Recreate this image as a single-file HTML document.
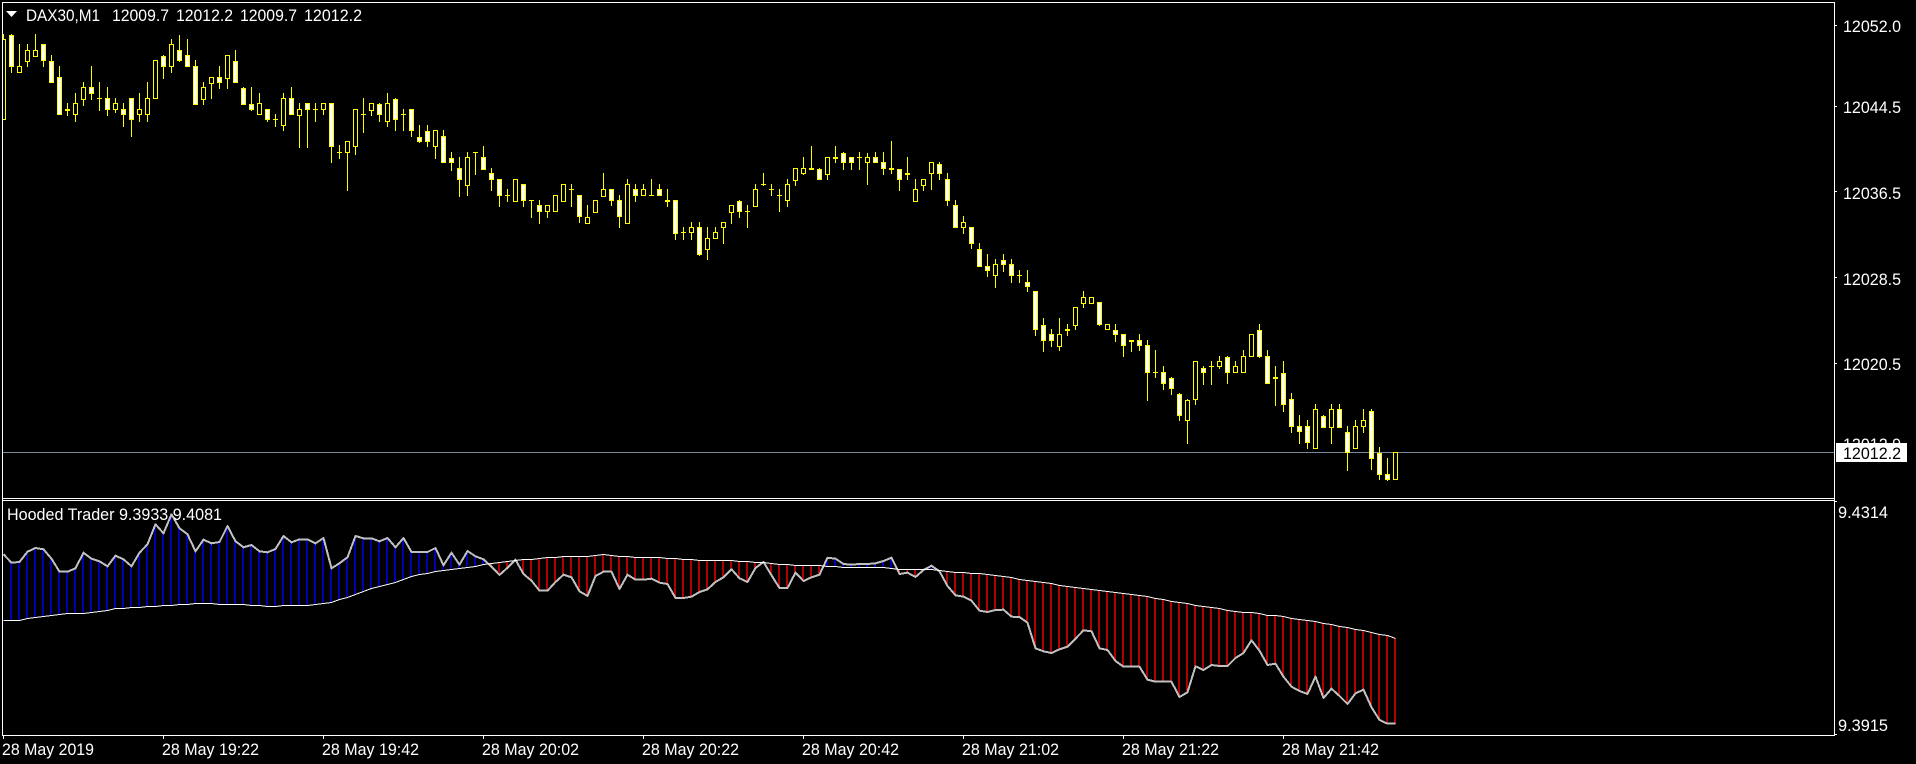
<!DOCTYPE html>
<html>
<head>
<meta charset="utf-8">
<title>DAX30,M1</title>
<style>
html,body{margin:0;padding:0;background:#000;width:1916px;height:764px;overflow:hidden}
svg{display:block;position:absolute;left:0;top:0}
text{font-family:"Liberation Sans",Arial,sans-serif;font-size:17px;fill:#fff;white-space:pre}
</style>
</head>
<body>
<svg id="s" width="1916" height="764" viewBox="0 0 1916 764" xmlns="http://www.w3.org/2000/svg">
<defs><clipPath id="c"><rect x="3" y="3" width="1831" height="495"/></clipPath></defs>
<rect width="1916" height="764" fill="#000"/>
<rect x="3" y="452" width="1831" height="1" fill="#778899"/>
<g id="candles" clip-path="url(#c)" shape-rendering="crispEdges"></g>
<g id="ind"></g>
<g shape-rendering="crispEdges" fill="#fff">
<rect x="2" y="2" width="1833" height="1"/>
<rect x="2" y="498" width="1833" height="1"/>
<rect x="2" y="500" width="1833" height="1"/>
<rect x="2" y="735" width="1833" height="1"/>
<rect x="2" y="2" width="1" height="734"/>
<rect x="1834" y="2" width="1" height="734"/>
<rect x="1835" y="25" width="2" height="1"/>
<rect x="1835" y="106" width="2" height="1"/>
<rect x="1835" y="191" width="2" height="1"/>
<rect x="1835" y="277" width="2" height="1"/>
<rect x="1835" y="363" width="2" height="1"/>
<rect x="1835" y="501" width="2" height="1"/>
<rect x="1835" y="734" width="2" height="1"/>
<rect x="3" y="736" width="1" height="3"/>
<rect x="163" y="736" width="1" height="3"/>
<rect x="323" y="736" width="1" height="3"/>
<rect x="483" y="736" width="1" height="3"/>
<rect x="643" y="736" width="1" height="3"/>
<rect x="803" y="736" width="1" height="3"/>
<rect x="963" y="736" width="1" height="3"/>
<rect x="1123" y="736" width="1" height="3"/>
<rect x="1283" y="736" width="1" height="3"/>
</g>
<polygon points="6,11 17,11 11.5,17" fill="#fff"/>
<text lengthAdjust="spacingAndGlyphs" x="26" y="21" textLength="74">DAX30,M1</text>
<text lengthAdjust="spacingAndGlyphs" x="112" y="21" textLength="57">12009.7</text>
<text lengthAdjust="spacingAndGlyphs" x="176" y="21" textLength="57">12012.2</text>
<text lengthAdjust="spacingAndGlyphs" x="240" y="21" textLength="57">12009.7</text>
<text lengthAdjust="spacingAndGlyphs" x="304" y="21" textLength="58">12012.2</text>
<text lengthAdjust="spacingAndGlyphs" x="1843" y="32" textLength="58">12052.0</text>
<text lengthAdjust="spacingAndGlyphs" x="1843" y="113" textLength="58">12044.5</text>
<text lengthAdjust="spacingAndGlyphs" x="1843" y="199" textLength="58">12036.5</text>
<text lengthAdjust="spacingAndGlyphs" x="1843" y="285" textLength="58">12028.5</text>
<text lengthAdjust="spacingAndGlyphs" x="1843" y="370" textLength="58">12020.5</text>
<text lengthAdjust="spacingAndGlyphs" x="1843" y="450" textLength="58">12012.9</text>
<rect x="1836" y="443" width="71" height="19" fill="#fff" shape-rendering="crispEdges"/>
<text lengthAdjust="spacingAndGlyphs" x="1843" y="459" textLength="58" style="fill:#000">12012.2</text>
<text lengthAdjust="spacingAndGlyphs" x="1838" y="518" textLength="50">9.4314</text>
<text lengthAdjust="spacingAndGlyphs" x="1838" y="731" textLength="50">9.3915</text>
<text lengthAdjust="spacingAndGlyphs" x="7" y="520" textLength="215">Hooded Trader 9.3933 9.4081</text>
<text lengthAdjust="spacingAndGlyphs" x="2" y="755" textLength="92">28 May 2019</text>
<text lengthAdjust="spacingAndGlyphs" x="162" y="755" textLength="97">28 May 19:22</text>
<text lengthAdjust="spacingAndGlyphs" x="322" y="755" textLength="97">28 May 19:42</text>
<text lengthAdjust="spacingAndGlyphs" x="482" y="755" textLength="97">28 May 20:02</text>
<text lengthAdjust="spacingAndGlyphs" x="642" y="755" textLength="97">28 May 20:22</text>
<text lengthAdjust="spacingAndGlyphs" x="802" y="755" textLength="97">28 May 20:42</text>
<text lengthAdjust="spacingAndGlyphs" x="962" y="755" textLength="97">28 May 21:02</text>
<text lengthAdjust="spacingAndGlyphs" x="1122" y="755" textLength="97">28 May 21:22</text>
<text lengthAdjust="spacingAndGlyphs" x="1282" y="755" textLength="97">28 May 21:42</text>
</svg>
<script>
(function(){
var A=[[102,358,118,358,0],[102,218,106,200,1],[132,218,199,218,0],[132,200,151,185,0],[102,170,151,170,0],[132,200,133,182,1],[166,248,184,248,1],[198,344,232,344,1],[310,345,328,332,1],[280,365,310,344,0],[247,315,262,298,0],[198,298,262,281,1],[247,332,295,295,1],[262,345,295,329,1],[295,338,310,328,0],[310,380,328,344,1],[295,410,295,359,1],[280,365,328,344,0],[247,365,295,344,0],[181,296,181,296,0],[166,236,169,200,1],[118,218,133,200,0],[106,185,151,182,1],[118,200,166,200,1],[181,314,199,314,1],[247,314,262,298,0],[232,296,232,250,0],[198,266,232,248,1],[166,266,166,236,0],[151,248,184,248,1],[262,314,265,314,1],[262,332,313,329,1],[280,344,310,344,0],[328,365,328,359,1],[343,380,358,358,1],[280,392,295,377,0],[262,344,295,344,1],[310,443,328,347,0],[310,443,310,329,1],[310,365,328,328,1],[310,344,310,329,0],[310,488,310,440,1],[437,476,457,457,1],[424,572,424,457,0],[328,462,328,440,0],[295,396,343,343,1],[310,347,310,332,0],[310,365,313,344,1],[280,380,310,365,0],[295,392,298,359,1],[328,392,343,343,1],[328,410,328,392,1],[375,428,412,425,1],[375,440,394,425,1],[392,476,392,440,0],[392,488,409,488,1],[457,510,475,488,1],[472,590,505,539,1],[457,587,472,557,0],[457,522,457,457,1]];
var B=[[138,208,172,208,1],[205,272,220,239,1],[238,320,238,287,1],[268,305,287,287,1],[238,305,238,305,0],[253,320,253,302,1],[301,353,301,301,1],[301,371,316,335,1],[316,353,316,335,0],[286,335,286,335,0],[253,305,253,305,0],[253,320,268,268,1],[286,368,286,350,1],[316,371,352,371,0],[301,338,301,338,0],[220,290,268,290,0],[268,317,268,302,1],[286,383,301,350,1],[238,371,253,371,0],[253,305,268,287,1],[253,287,268,287,0],[238,287,286,286,1],[253,287,268,287,1],[268,320,301,305,1],[301,419,301,401,1],[381,419,397,397,1],[366,419,382,398,0],[366,467,382,464,1],[381,479,415,449,0],[381,416,397,416,0],[367,431,367,383,0],[316,371,316,338,0],[301,353,304,335,1],[316,383,334,334,1],[253,320,268,320,0],[220,257,253,253,1],[253,287,268,268,1],[268,335,286,286,1],[238,320,253,302,0],[205,257,205,242,0],[172,224,205,220,0],[138,209,205,209,1],[205,239,208,239,1],[172,239,172,224,0],[138,188,172,176,1],[157,209,160,188,1],[172,209,172,188,1],[157,209,172,172,1],[160,254,172,188,0],[157,188,172,188,1],[157,224,187,205,1],[124,220,205,209,1],[208,272,208,239,1],[172,239,220,224,1],[238,305,268,305,0],[238,272,238,257,0],[187,269,187,220,0],[187,239,193,220,1],[220,317,238,302,1],[301,383,316,383,1]];
var C=[[198,251,217,232,0],[232,296,232,281,1],[280,350,298,350,1],[313,380,349,362,1],[328,413,343,377,0],[313,365,331,344,1],[328,398,343,377,1],[361,398,376,376,1],[361,425,397,410,1],[424,557,424,539,1],[505,605,526,572,1],[538,590,553,572,1],[505,602,553,590,0],[523,557,538,542,1],[472,539,472,527,0],[424,473,442,461,0],[442,461,442,461,0],[457,527,457,524,1],[523,539,523,539,0],[523,575,541,554,1],[553,620,553,587,1],[571,605,571,575,1],[553,602,571,587,1],[571,752,586,668,1],[601,683,667,667,1],[649,719,667,701,1],[682,734,685,716,1],[730,812,733,797,1],[748,881,751,812,0],[634,764,634,749,0],[649,704,655,668,1],[634,704,649,649,1],[619,656,634,650,0],[619,701,622,668,1],[634,668,649,668,0],[601,668,619,668,0],[553,620,553,620,0],[523,623,541,620,1],[601,701,619,701,1],[649,767,682,686,1],[634,785,670,764,1],[730,848,748,830,1],[796,881,829,845,1],[811,896,829,878,1],[763,896,778,896,0],[796,833,799,833,1],[763,881,778,833,0],[763,833,778,833,1],[829,962,847,908,1],[811,896,829,896,0],[778,848,811,830,0],[778,959,784,926,1],[892,989,910,974,1],[925,992,973,989,1],[907,989,907,989,0]];
var wy='',yo='',wh='',bk='';
function r(x,y,w,h){return 'M'+x+' '+y+'h'+w+'v'+h+'h'+(-w)+'z'}
function add(arr,y0,k0){
 arr.forEach(function(d,i){
  var x=3+8*(k0+i),f=function(v){return y0+Math.floor(v/3)};
  var hi=f(d[0]),lo=f(d[1]),t=f(d[2]),b=f(d[3]);
  wy+=r(x,hi,1,lo-hi+1);
  yo+=r(x-2,t,5,b-t+1);
  if(b-t>=2){ if(d[4]) wh+=r(x-1,t+1,3,b-t-1); else bk+=r(x-1,t+1,3,b-t-1); }
 });
}
add(A,0,0);add(B,100,60);add(C,150,120);
document.getElementById('candles').innerHTML='<path d="'+wy+yo+'" fill="#ffff00"/><path d="'+bk+'" fill="#000"/><path d="'+wh+'" fill="#fff"/>';

var F5=[193,218,216,185,174,178,206,245,245,235,188,206,214,229,197,208,229,188,163,103,130,73,115,133,184,149,160,156,108,154,172,165,184,187,177,138,157,148,148,160,144,235,220,202,138,145,145,154,144,172,144,186,186,186,174,226,188,224,183,199,208,230,255,233,209];
var S5=[391,391,391,384,381,378,375,372,370,370,368,366,363,359,355,355,352,351,349,348,346,345,342,342,340,340,340,342,342,342,342,346,346,349,349,345,345,345,345,342,338,335,326,321,312,304,295,288,282,275,268,258,252,248,243,240,236,234,231,227,222,220,217,214,209];
var F6=[222,242,272,272,246,224,232,274,288,228,215,215,267,224,239,239,236,248,252,294,294,290,276,268,246,232,208,235,246,204,186,226,264,264,218,243,232,224,173,176,192,194,192,192,190,183,173,222,218,231,210,197,214,258,286,290,302,332,336,330,329,350,351];
var S6=[178,176,173,170,170,167,167,167,167,164,163,166,167,167,170,170,170,170,173,173,176,176,179,179,179,179,179,182,182,185,185,188,192,192,196,196,196,196,199,199,200,202,202,202,202,202,204,206,208,208,208,208,211,212,215,217,218,220,223,226,229,232,236];
var F7=[278,355,364,369,358,350,326,301,304,355,360,393,410,410,410,449,455,455,455,501,487,409,420,405,408,408,384,369,331,362,405,401,440,470,483,492,440,504,476,498,522,490,479,532,570,581,581];
var S7=[150,153,156,160,164,167,171,174,177,180,182,185,190,193,196,199,203,208,212,216,220,224,227,231,235,239,242,245,247,248,254,254,258,263,266,270,274,278,283,287,292,297,301,306,311,316,325];
var fast=[],slow=[];
F5.forEach(function(v){fast.push(490+v/3)});S5.forEach(function(v){slow.push(490+v/3)});
F6.forEach(function(v){fast.push(500+v/3)});S6.forEach(function(v){slow.push(500+v/3)});
F7.forEach(function(v){fast.push(530+v/3)});S7.forEach(function(v){slow.push(530+v/3)});
var blue='',red='',fp='',sp='';
for(var k=0;k<fast.length;k++){
 var x=3+8*k,a=Math.round(fast[k]),b=Math.round(slow[k]);
 if(k>0){
  if(a<b) blue+=r(x-1,a,2,b-a); else if(a>b) red+=r(x-1,b,2,a-b);
 }
 fp+=(k?'L':'M')+(x+.5)+' '+fast[k].toFixed(1);
 sp+=(k?'L':'M')+(x+.5)+' '+(b+.5);
}
document.getElementById('ind').innerHTML='<g shape-rendering="crispEdges"><path d="'+blue+'" fill="#0000b0"/><path d="'+red+'" fill="#b00000"/></g><path d="'+fp+'" fill="none" stroke="#c0c0c0" stroke-width="2" stroke-linejoin="round" shape-rendering="crispEdges"/><path d="'+sp+'" fill="none" stroke="#fff" stroke-width="1" shape-rendering="crispEdges"/>';
})();
</script>
</body>
</html>
